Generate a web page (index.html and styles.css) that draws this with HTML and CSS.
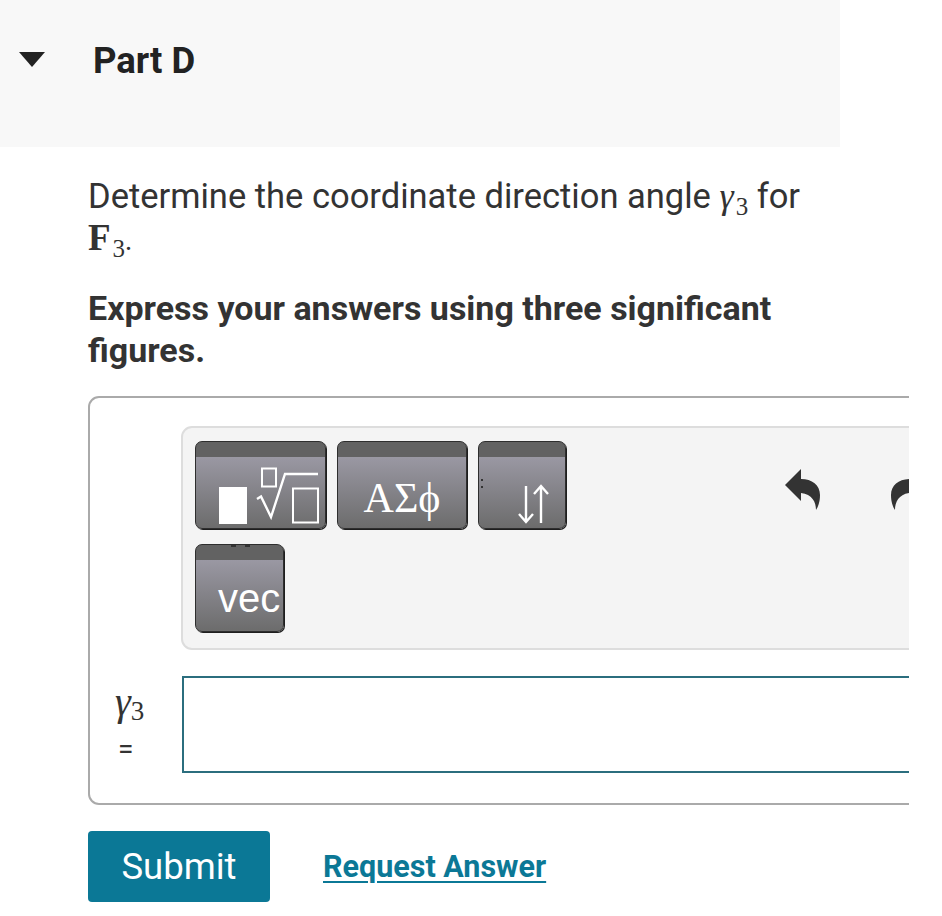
FILE: index.html
```html
<!DOCTYPE html>
<html lang="en">
<head>
<meta charset="utf-8">
<title>Part D</title>
<link rel="stylesheet" href="styles.css">
</head>
<body>
<div class="page">
  <header class="part-head">
    <span class="caret"></span>
    <h2 class="part-title">Part D</h2>
  </header>
  <div class="content">
    <p class="prompt">Determine the coordinate direction angle <span class="math"><i class="mi">γ</i><sub class="msub">3</sub></span> for <span class="math"><b class="mb">F</b><sub class="msub">3</sub><span class="mdot">.</span></span></p>
    <p class="instr">Express your answers using three significant figures.</p>

    <div class="answer">
      <div class="toolbar">
        <div class="tools">
          <div class="tool-row">
            <button class="tbtn tbtn-tpl" type="button" aria-label="Templates">
              <svg class="ico" width="131" height="88" viewBox="0 0 131 88">
                <rect x="24" y="46" width="28" height="37" fill="#fff"/>
                <rect x="67" y="27.5" width="14" height="18" fill="none" stroke="#fff" stroke-width="2"/>
                <path d="M62 58 L66 55.5 L76 76 L90 33 L123 33" fill="none" stroke="#fff" stroke-width="2.4" stroke-linejoin="miter"/>
                <rect x="98" y="47.5" width="25" height="34" fill="none" stroke="#fff" stroke-width="2"/>
              </svg>
            </button>
            <button class="tbtn tbtn-greek" type="button">ΑΣϕ</button>
            <button class="tbtn tbtn-arrows" type="button" aria-label="Arrows">
              <span class="dots"></span>
              <svg class="ico-arrows" width="36" height="42" viewBox="0 0 36 42">
                <path d="M10 3 V39 M3 31 L10 39 L17 31" fill="none" stroke="#fff" stroke-width="2.4"/>
                <path d="M25 40 V3 M18 11 L25 3 L32 11" fill="none" stroke="#fff" stroke-width="2.4"/>
              </svg>
            </button>
          </div>
          <div class="tool-row">
            <button class="tbtn tbtn-vec" type="button"><span class="ticks"></span>vec</button>
          </div>
        </div>
        <div class="history">
          <svg class="hist-ico" width="36" height="42" viewBox="0 0 36 42" aria-label="Undo">
            <path d="M0 16 L16 0 L16 10 C27 10 35 16 35 26 C35 33 33 38 31 41 C31 33 27 25 16 24 L16 32 Z" fill="#333"/>
          </svg>
          <svg class="hist-ico" width="36" height="42" viewBox="0 0 36 42" aria-label="Redo">
            <path d="M36 16 L20 0 L20 10 C9 10 1 16 1 26 C1 33 3 38 5 41 C5 33 9 25 20 24 L20 32 Z" fill="#333"/>
          </svg>
        </div>
      </div>

      <div class="input-row">
        <label class="var-label"><span class="math"><i class="mi">γ</i><sub class="msub">3</sub></span> <span class="eq">=</span></label>
        <div class="input-box"></div>
      </div>
    </div>

    <div class="actions">
      <button class="submit" type="button">Submit</button>
      <a class="request" href="#">Request Answer</a>
    </div>
  </div>
</div>
</body>
</html>
```

FILE: styles.css
```css
* { box-sizing: border-box; }

html, body {
  margin: 0;
  padding: 0;
  background: #fff;
}

body {
  font-family: Roboto, "Liberation Sans", sans-serif;
  color: #333;
}

.page {
  width: 909px;
  overflow: hidden;
  padding-bottom: 13px;
}

.part-head {
  width: 840px;
  height: 147px;
  background: #f8f8f8;
  display: flex;
  align-items: flex-start;
}

.caret {
  width: 0;
  height: 0;
  margin: 52px 0 0 19px;
  border-left: 13.5px solid transparent;
  border-right: 13.5px solid transparent;
  border-top: 15px solid #222;
}

.part-title {
  margin: 39px 0 0 48px;
  font-size: 36.5px;
  font-weight: 700;
  line-height: 44px;
  color: #222;
}

.content {
  padding-left: 88px;
}

.prompt {
  margin: 28px 0 0;
  font-size: 34.5px;
  line-height: 42px;
  color: #333;
  width: 740px;
}

.math {
  font-family: "Liberation Serif", "DejaVu Serif", serif;
  white-space: nowrap;
}

.mi {
  font-style: italic;
  font-size: 36px;
}

.mb {
  font-weight: 700;
  font-size: 37px;
}

.msub {
  font-size: 25px;
  vertical-align: -7px;
  line-height: 0;
  margin-left: 2px;
}

.mdot {
  font-size: 28px;
}

.instr {
  margin: 25px 0 0;
  font-size: 34px;
  font-weight: 700;
  line-height: 42px;
  color: #333;
  width: 740px;
}

.answer {
  margin-top: 25px;
  width: 900px;
  border: 2px solid #aaa;
  border-radius: 11px;
  padding: 28px 0 30px 25px;
}

.toolbar {
  margin-left: 66px;
  height: 224px;
  border: 2px solid #ddd;
  border-radius: 11px;
  background: #f4f4f4;
  padding: 13px 12px 0;
  display: flex;
  align-items: flex-start;
}

.tools {
  display: flex;
  flex-direction: column;
  gap: 15px;
}

.tool-row {
  display: flex;
  gap: 11px;
}

.tbtn {
  position: relative;
  height: 88px;
  padding: 0;
  border: 1px solid #2e2e2e;
  border-radius: 7px;
  box-shadow: 1px 1px 0 #1e1e1e;
  background: linear-gradient(#626262 0, #626262 15px, #9a98a3 15px, #6c6c6c 100%);
  color: #fff;
  overflow: hidden;
  display: flex;
  align-items: flex-end;
  justify-content: center;
}

.tbtn-tpl { width: 131px; }
.tbtn-greek {
  width: 130px;
  font-family: "Liberation Serif", "DejaVu Serif", serif;
  font-size: 42px;
  line-height: 1;
  padding-bottom: 9px;
}
.tbtn-arrows { width: 88px; }
.tbtn-vec {
  width: 89px;
  font-family: "Liberation Sans", Arial, sans-serif;
  font-size: 40px;
  line-height: 1;
  padding: 0 0 13px 22px;
  justify-content: flex-start;
  white-space: nowrap;
}

.ico {
  position: absolute;
  left: -1px;
  top: -1px;
}

.ico-arrows {
  position: absolute;
  left: 37px;
  top: 41px;
}

.dots {
  position: absolute;
  left: 2px;
  top: 37px;
  width: 2px;
  height: 9px;
  border-top: 2px dotted #333;
  border-bottom: 2px dotted #333;
}

.ticks {
  position: absolute;
  left: 35px;
  top: 0;
  width: 20px;
  height: 2px;
  background: linear-gradient(90deg, #333 0 5px, transparent 5px 14px, #333 14px 19px, transparent 19px);
}

.history {
  display: flex;
  gap: 69px;
  margin: 28px 0 0 219px;
}

.hist-ico { display: block; flex: none; }

.input-row {
  margin-top: 26px;
  display: flex;
  align-items: flex-start;
}

.var-label {
  width: 67px;
  flex: none;
  padding-top: 6px;
  line-height: 39px;
  display: flex;
  flex-direction: column;
  align-items: flex-start;
}

.var-label .mi { font-size: 40px; }
.var-label .msub { font-size: 27px; vertical-align: -5px; margin-left: 0; }

.eq {
  font-family: Roboto, "Liberation Sans", sans-serif;
  font-size: 28px;
  color: #333;
  padding-left: 3px;
}

.input-box {
  flex: 1;
  height: 97px;
  border: 2px solid #2b6e7e;
  background: #fff;
}

.actions {
  margin-top: 26px;
  display: flex;
  align-items: center;
  gap: 53px;
}

.submit {
  width: 182px;
  height: 71px;
  border: 0;
  border-radius: 4px;
  background: #0b7896;
  color: #fff;
  font-family: Roboto, "Liberation Sans", sans-serif;
  font-size: 36.5px;
}

.request {
  font-size: 30.5px;
  font-weight: 700;
  color: #0b7896;
  text-decoration: underline;
  text-underline-offset: 4px;
  text-decoration-thickness: 2px;
}
```
